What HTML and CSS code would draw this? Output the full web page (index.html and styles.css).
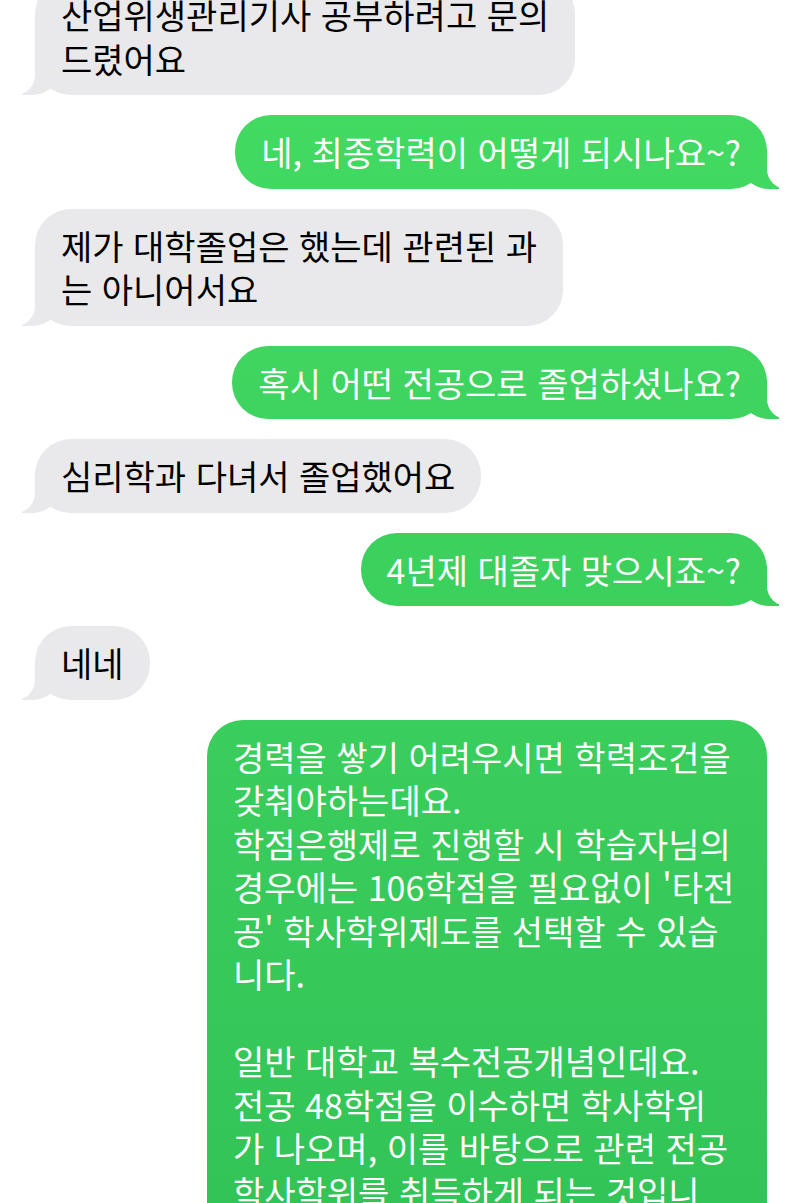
FILE: index.html
```html
<!DOCTYPE html>
<html lang="ko">
<head>
  <meta charset="UTF-8">
  <title>메시지</title>
  <meta name="viewport" content="width=device-width, initial-scale=1.0">
  <link rel="stylesheet" href="styles.css">
</head>
<body>

  <div class="chat">
    <div class="bubble them">산업위생관리기사 공부하려고 문의<br>드렸어요</div>
    <div class="bubble me">네, 최종학력이 어떻게 되시나요~?</div>
    <div class="bubble them">제가 대학졸업은 했는데 관련된 과<br>는 아니어서요</div>
    <div class="bubble me">혹시 어떤 전공으로 졸업하셨나요?</div>
    <div class="bubble them">심리학과 다녀서 졸업했어요</div>
    <div class="bubble me">4년제 대졸자 맞으시죠~?</div>
    <div class="bubble them">네네</div>
    <div class="bubble me long">경력을 쌓기 어려우시면 학력조건을<br>갖춰야하는데요.<br>학점은행제로 진행할 시 학습자님의<br>경우에는 106학점을 필요없이 '타전<br>공' 학사학위제도를 선택할 수 있습<br>니다.<br><br>일반 대학교 복수전공개념인데요.<br>전공 48학점을 이수하면 학사학위<br>가 나오며, 이를 바탕으로 관련 전공<br>학사학위를 취득하게 되는 것입니<br>다.</div>
  </div>

</body>
</html>
```

FILE: styles.css
```css
body {
  margin: 0;
  background: #fff;
  font-family: "Noto Sans CJK KR", "Noto Sans", sans-serif;
  overflow: hidden;
}

.chat {
  display: flex;
  flex-direction: column;
  gap: 20px;
  margin-top: -22px;
  padding: 0 33px 40px 35px;
}

.bubble {
  position: relative;
  padding: 15px 26px;
  border-radius: 36px;
  font-size: 34px;
  line-height: 43.5px;
  white-space: nowrap;
}

/* received */
.them {
  align-self: flex-start;
  background: #e9e9eb;
  color: #000;
}

.them::before {
  content: "";
  position: absolute;
  bottom: 0;
  left: -13px;
  width: 40px;
  height: 40px;
  background: #e9e9eb;
  border-bottom-right-radius: 30px;
}

.them::after {
  content: "";
  position: absolute;
  bottom: 0;
  left: -22px;
  width: 22px;
  height: 40px;
  background: #fff;
  border-bottom-right-radius: 20px;
}

/* sent */
.me {
  align-self: flex-end;
  color: #fff;
  background: linear-gradient(#44dc63, #33c457) fixed;
}

.me::before {
  content: "";
  position: absolute;
  bottom: 0;
  right: -12px;
  width: 40px;
  height: 40px;
  background: linear-gradient(#44dc63, #33c457) fixed;
  border-bottom-left-radius: 30px;
}

.me::after {
  content: "";
  position: absolute;
  bottom: 0;
  right: -22px;
  width: 22px;
  height: 40px;
  background: #fff;
  border-bottom-left-radius: 20px;
}

.long {
  width: 508px;
}
```
